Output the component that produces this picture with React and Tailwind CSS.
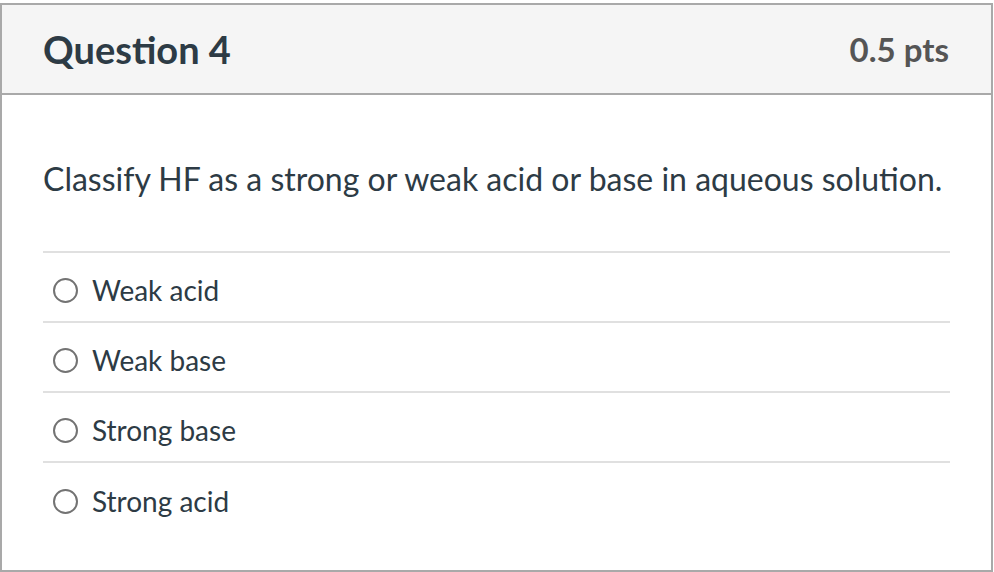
export default function App() {
  const options = ["Weak acid", "Weak base", "Strong base", "Strong acid"];
  return (
    <div className="w-[994px] h-[572px] bg-white pt-[3px]" style={{ fontFamily: "Lato, 'Open Sans', sans-serif" }}>
      <div className="w-[993px] h-[569px] border-2 border-[#a9a9a9] flex flex-col">
        <div className="h-[90px] bg-[#f5f5f5] border-b-2 border-[#a9a9a9] flex items-center justify-between pl-[41px] pr-[42px]">
          <h2 className="text-[38px] font-bold text-[#2d3b45] leading-none">Question 4</h2>
          <span className="text-[33px] font-bold text-[#555555] leading-none">0.5 pts</span>
        </div>
        <div className="px-[41px] pt-[64px]">
          <p className="text-[32px] text-[#2d3b45] leading-[40px]">
            Classify HF as a strong or weak acid or base in aqueous solution.
          </p>
          <div className="mt-[52px] border-t-2 border-[#e0e0e0]">
            {options.map((o, i) => (
              <div
                key={o}
                className={`h-[70px] flex items-center gap-[14px] pl-[10px] pt-[6px] ${i < options.length - 1 ? "border-b-2 border-[#e0e0e0]" : ""}`}
              >
                <span className="w-[25px] h-[25px] rounded-full border-2 border-[#737373] bg-white shrink-0" />
                <span className="text-[28px] text-[#2d3b45] leading-none">{o}</span>
              </div>
            ))}
          </div>
        </div>
      </div>
    </div>
  );
}
